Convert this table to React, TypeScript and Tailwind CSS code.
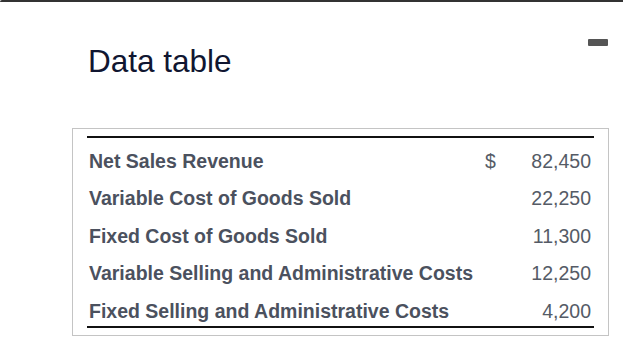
import React from "react";

const rows: [string, string, boolean][] = [
  ["Net Sales Revenue", "82,450", true],
  ["Variable Cost of Goods Sold", "22,250", false],
  ["Fixed Cost of Goods Sold", "11,300", false],
  ["Variable Selling and Administrative Costs", "12,250", false],
  ["Fixed Selling and Administrative Costs", "4,200", false],
];

export default function App() {
  return (
    <div
      className="w-[623px] h-[360px] bg-white overflow-hidden"
      style={{ fontFamily: '"Liberation Sans", Arial, sans-serif' }}
    >
      <div className="h-[2px] bg-[#333333] rounded-tl-[3px]" />
      <div className="relative">
        <div className="absolute left-[588px] top-[37px] w-[20px] h-[7px] bg-[#555555] rounded-[1px]" />
      </div>
      <div className="pl-[88px] pt-[42px] h-[126px]">
        <h1 className="text-[31.5px] leading-[34px] text-[#101631] font-normal">Data table</h1>
      </div>
      <div className="ml-[72px] w-[537px] border border-[#c4c4c4] px-[14px] py-[7px]">
        <div className="border-t-2 border-b-2 border-[#111] w-[507px]">
          {rows.map(([label, value, dollar]) => (
            <div key={label} className="flex items-end pb-[4px] h-[37.5px] text-[19.5px] leading-[22px] text-[#4b515e]">
              <div className="font-bold pl-[2px] flex-1">{label}</div>
              <div className="w-[20px] text-[#555b66]">{dollar ? "$" : ""}</div>
              <div className="w-[89px] text-right pr-[3px] text-[#555b66]">{value}</div>
            </div>
          ))}
        </div>
      </div>
    </div>
  );
}
